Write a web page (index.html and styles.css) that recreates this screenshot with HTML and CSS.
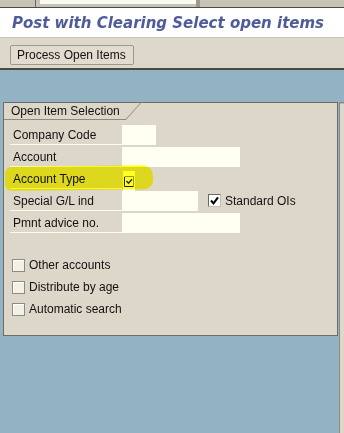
FILE: index.html
```html
<!DOCTYPE html>
<html lang="en">
<head>
    <meta charset="UTF-8">
    <title>Post with Clearing</title>
    <link rel="stylesheet" href="styles.css">
</head>
<body>
    <div class="topbar">
        <span class="sep"></span>
        <span class="cmd"></span>
        <span class="cmd-end"></span>
    </div>
    <div class="titlebar">
        <h1>Post with Clearing Select open items</h1>
    </div>
    <div class="toolbar">
        <button>Process Open Items</button>
    </div>
    <div class="screen">
        <div class="work">
            <div class="group">
                <div class="tab">Open Item Selection</div>
                <div class="rows">
                    <div class="row">
                        <label>Company Code</label>
                        <span class="field w-code"></span>
                    </div>
                    <div class="row">
                        <label>Account</label>
                        <span class="field w-long"></span>
                    </div>
                    <div class="row">
                        <span class="marker"></span>
                        <label>Account Type</label>
                        <span class="field w-type">
                            <svg width="10" height="11" viewBox="0 0 10 11">
                                <path d="M0.5 1v9.5h9" fill="none" stroke="#222" stroke-width="1"/>
                                <path d="M0.5 0.5h9v10" fill="none" stroke="#9a9a70" stroke-width="1"/>
                                <path d="M2.5 5l2 2.2 3.5-4" fill="none" stroke="#222" stroke-width="1.3"/>
                            </svg>
                        </span>
                    </div>
                    <div class="row">
                        <label>Special G/L ind</label>
                        <span class="field w-mid"></span>
                        <span class="check on">
                            <svg width="11" height="11" viewBox="0 0 11 11">
                                <path d="M2 5.5l2.5 2.8 4.5-6" fill="none" stroke="#000" stroke-width="2"/>
                            </svg>
                        </span>
                        <span class="check-text">Standard OIs</span>
                    </div>
                    <div class="row">
                        <label>Pmnt advice no.</label>
                        <span class="field w-long"></span>
                    </div>
                </div>
                <div class="checks">
                    <div class="check-row"><span class="check"></span><span class="check-text">Other accounts</span></div>
                    <div class="check-row"><span class="check"></span><span class="check-text">Distribute by age</span></div>
                    <div class="check-row"><span class="check"></span><span class="check-text">Automatic search</span></div>
                </div>
            </div>
            <div class="scroll"></div>
        </div>
    </div>
</body>
</html>
```

FILE: styles.css
```css
body {
    margin: 0;
    width: 344px;
    height: 433px;
    overflow: hidden;
    font-family: "Liberation Sans", Arial, sans-serif;
    font-size: 12px;
    color: #111;
    background-color: #93b3c5;
}
.topbar {
    display: flex;
    height: 7px;
    background-color: #c6c4b4;
    border-bottom: 1px solid #4c4c46;
}
.sep {
    width: 1px;
    margin-left: 35px;
    background-color: #6a6a62;
}
.cmd {
    width: 156px;
    height: 4px;
    margin-left: 4px;
    background-color: #fbfaf2;
}
.cmd-end {
    width: 4px;
    background-color: #9c9a90;
}
.titlebar {
    height: 29px;
    background-color: #fff;
    border-bottom: 1px solid #c9c6ba;
}
h1 {
    margin: 0;
    padding-left: 12px;
    line-height: 30px;
    font-family: "DejaVu Sans", Verdana, sans-serif;
    font-size: 15px;
    font-weight: bold;
    font-style: italic;
    color: #4e5c9a;
}
.toolbar {
    height: 30px;
    background-color: #ddd8c9;
    border-bottom: 2px solid #4a4a44;
}
.toolbar button {
    margin: 7px 0 0 10px;
    width: 124px;
    height: 20px;
    padding: 0 0 0 6px;
    text-align: left;
    font-family: "Liberation Sans", Arial, sans-serif;
    font-size: 12px;
    color: #111;
    background-color: #e1dccf;
    border: 1px solid #9c9a90;
    border-radius: 2px;
}
.screen {
    padding-top: 32px;
}
.work {
    display: flex;
    height: 331px;
}
.group {
    align-self: flex-start;
    width: 333px;
    height: 232px;
    margin-left: 3px;
    background-color: #ddd7c9;
    border: 1px solid #6e6e66;
}
.scroll {
    width: 4px;
    margin-left: 1px;
    background-color: #ddd8c9;
    border-left: 1px solid #8a8a80;
    border-top: 1px solid #8a8a80;
    box-shadow: inset 0 18px 0 -17px #b8b4a8;
}
.tab {
    position: relative;
    width: 115px;
    height: 16px;
    padding-left: 7px;
    line-height: 16px;
    border-bottom: 1px solid #8a8a80;
}
.tab::after {
    content: "";
    position: absolute;
    left: 129px;
    top: -1px;
    height: 18px;
    border-left: 1px solid #8a8a80;
    transform: skewX(-42deg);
}
.rows {
    padding-top: 5px;
}
.row {
    position: relative;
    display: flex;
    align-items: flex-start;
    height: 20px;
    margin-bottom: 2px;
}
.row label {
    width: 109px;
    height: 18px;
    margin-left: 6px;
    padding: 1px 0 0 3px;
    line-height: 18px;
    border-bottom: 1px solid #fbfaf4;
}
.field {
    height: 20px;
    background-color: #fffff2;
}
.w-code {
    width: 34px;
}
.w-long {
    width: 118px;
}
.w-mid {
    width: 76px;
}
.w-type {
    width: 12px;
    height: 20px;
    margin: 2px 0 0 1px;
    display: flex;
    align-items: center;
    justify-content: center;
}
.marker {
    position: absolute;
    left: 1px;
    top: -3px;
    width: 148px;
    height: 24px;
    background-color: #ffff26;
    border-radius: 7px 10px 9px 6px;
    mix-blend-mode: multiply;
    transform: rotate(-0.6deg);
    z-index: 2;
}
.check {
    display: inline-flex;
    align-items: center;
    justify-content: center;
    box-sizing: border-box;
    width: 13px;
    height: 13px;
    background-color: #f3f0e6;
    border: 1px solid #8c8a82;
    box-shadow: inset 1px 1px 0 #fff;
}
.check.on {
    margin: 3px 0 0 10px;
    background-color: #fff;
    border-color: #6a6a64 #c4c2b8 #c4c2b8 #6a6a64;
    box-shadow: none;
}
.check-text {
    margin-left: 4px;
    line-height: 20px;
}
.checks {
    margin-top: 21px;
    padding-left: 8px;
}
.check-row {
    display: flex;
    align-items: center;
    height: 22px;
}
.check-row .check-text {
    line-height: 22px;
}
```
